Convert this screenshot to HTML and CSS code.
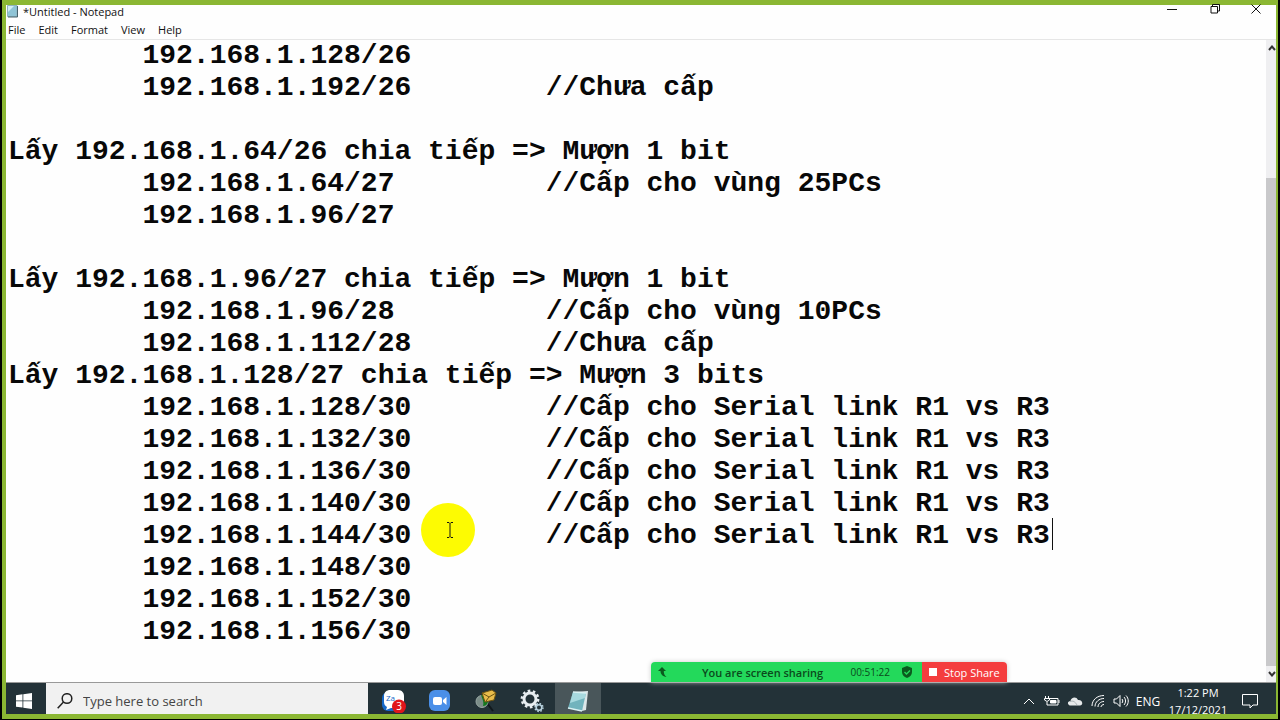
FILE: index.html
```html
<!DOCTYPE html>
<html lang="vi">
<head>
  <meta charset="UTF-8">
  <meta name="viewport" content="width=device-width, initial-scale=1">
  <title>*Untitled - Notepad</title>
  <link rel="stylesheet" href="styles.css">
</head>
<body>
  <div class="screen">
    <main class="notepad">
      <header class="titlebar">
        <svg class="app-icon" viewBox="0 0 12 14" aria-hidden="true">
          <path d="M1.500 1.500h9.500v11H1.500z" fill="#8fc4d6" stroke="#8fb3be"/>
          <path d="M2 8L8 2H2z" fill="#d3edf5"/>
          <path d="M11.500 2v11H2" fill="none" stroke="#45606a"/>
        </svg>
        <h1>*Untitled - Notepad</h1>
        <div class="window-buttons">
          <button aria-label="Minimize"><svg viewBox="0 0 10 10"><path d="M0 5.500h10"/></svg></button>
          <button aria-label="Restore"><svg viewBox="0 0 10 10"><path d="M1 2.500h6.500V9H1zM2.500 2.500V.5H9.500V7H7.500"/></svg></button>
          <button aria-label="Close"><svg viewBox="0 0 10 10"><path d="M.5.5l9 9M9.500.5l-9 9"/></svg></button>
        </div>
      </header>
      <nav class="menubar">
        <button>File</button>
        <button>Edit</button>
        <button>Format</button>
        <button>View</button>
        <button>Help</button>
      </nav>
      <div class="editor">
        <textarea class="document" aria-label="Text editor" wrap="off" spellcheck="false">
	192.168.1.128/26
	192.168.1.192/26	//Chưa cấp

Lấy 192.168.1.64/26 chia tiếp =&gt; Mượn 1 bit
	192.168.1.64/27		//Cấp cho vùng 25PCs
	192.168.1.96/27

Lấy 192.168.1.96/27 chia tiếp =&gt; Mượn 1 bit
	192.168.1.96/28		//Cấp cho vùng 10PCs
	192.168.1.112/28	//Chưa cấp
Lấy 192.168.1.128/27 chia tiếp =&gt; Mượn 3 bits
	192.168.1.128/30	//Cấp cho Serial link R1 vs R3
	192.168.1.132/30	//Cấp cho Serial link R1 vs R3
	192.168.1.136/30	//Cấp cho Serial link R1 vs R3
	192.168.1.140/30	//Cấp cho Serial link R1 vs R3
	192.168.1.144/30	//Cấp cho Serial link R1 vs R3
	192.168.1.148/30
	192.168.1.152/30
	192.168.1.156/30</textarea>
        <div class="scrollbar">
          <button aria-label="Scroll up"><svg viewBox="0 0 8 6"><path d="M1 5l3-3.500L7 5"/></svg></button>
          <div class="track"><div class="thumb"></div></div>
          <button aria-label="Scroll down"><svg viewBox="0 0 8 6"><path d="M1 1l3 3.500L7 1"/></svg></button>
        </div>
        <span class="caret"></span>
        <div class="pointer">
          <svg viewBox="0 0 8 16" aria-hidden="true"><path d="M1 .5h2l1 1 1-1h2M4 1.500v13M1 15.500h2l1-1 1 1h2"/></svg>
        </div>
      </div>
      <div class="share-bar">
        <div class="share-status">
          <svg class="share-arrow" viewBox="0 0 10 10" aria-hidden="true"><path d="M4 0L0 4h2.500c0 3 2 5.500 6 6C6.500 8.500 5.800 7 5.800 4H8z"/></svg>
          <strong>You are screen sharing</strong>
          <time>00:51:22</time>
          <svg class="share-shield" viewBox="0 0 10 12" aria-hidden="true"><path d="M5 0l5 2v4c0 3-2 5-5 6C2 11 0 9 0 6V2z" fill="#0b5a1e"/><path d="M2.500 6l2 2 3.500-3.500" fill="none" stroke="#23d95b" stroke-width="1.400"/></svg>
        </div>
        <button class="stop-share"><span class="stop-square"></span>Stop Share</button>
      </div>
    </main>

    <footer class="taskbar">
      <button class="start" aria-label="Start">
        <svg viewBox="0 0 16 16"><path d="M0 2.200L6.500 1.300v6.200H0zM7.300 1.200L16 0v7.500H7.300zM0 8.300h6.500v6.300L0 13.700zM7.300 8.300H16V16l-8.700-1.200z" fill="#fff"/></svg>
      </button>
      <label class="search">
        <svg viewBox="0 0 16 16" aria-hidden="true"><circle cx="10" cy="5.500" r="4.800"/><path d="M6.500 9L.7 15.300"/></svg>
        <input type="text" placeholder="Type here to search" aria-label="Type here to search">
      </label>
      <div class="apps">
        <button aria-label="Zalo">
          <svg viewBox="0 0 24 24">
            <rect x="0" y="3" width="20" height="19" rx="6" fill="#1668c9"/>
            <path d="M8 1h8c4 0 6 3 6 6v6c0 4-3 6-6 6H9l-5 2 1-3c-2-1-3-3-3-5V7c0-4 3-6 6-6z" fill="#fff"/>
            <text x="4" y="12" class="zalo-text">Za</text>
            <circle cx="17" cy="17.500" r="7" fill="#e0141c"/>
            <text x="17" y="21" class="badge-text">3</text>
          </svg>
        </button>
        <button aria-label="Zoom">
          <svg viewBox="0 0 24 24">
            <rect x="1" y="1" width="21" height="21" rx="6" fill="#4a8fe8"/>
            <rect x="5" y="8" width="9" height="8" rx="2" fill="#fff"/>
            <path d="M15 11l3.500-3v8L15 13z" fill="#fff"/>
          </svg>
        </button>
        <button aria-label="Packet Tracer">
          <svg viewBox="0 0 24 24">
            <path d="M13 14l6 8" stroke="#10181c" stroke-width="2"/>
            <circle cx="8" cy="12.500" r="6" fill="#7b8d88" stroke="#9aa8a4"/>
            <path d="M7 6c5 0 8 3 7 7-1 3-3 4-5 4 1-3 0-6-2-11z" fill="#13791f"/>
            <path d="M8 4l10-3 4 3-2 7-9 2z" fill="#e9bd4b" stroke="#6b5312"/>
            <path d="M8 4l7 4 7-4M15 8l-3 4" fill="none" stroke="#6b5312"/>
          </svg>
        </button>
        <button aria-label="Settings">
          <svg viewBox="0 0 24 24" fill="none" stroke="#e8eef1">
            <circle cx="10" cy="10" r="6" stroke-width="3"/>
            <circle cx="10" cy="10" r="8.200" stroke-width="2.400" stroke-dasharray="2.600 2.552"/>
            <circle cx="19" cy="18.500" r="2.800" stroke="#b9d3df" stroke-width="1.600"/>
            <circle cx="19" cy="18.500" r="4" stroke="#b9d3df" stroke-width="1.400" stroke-dasharray="1.600 1.542"/>
          </svg>
        </button>
        <button class="active" aria-label="Notepad">
          <svg viewBox="0 0 24 24">
            <path d="M7 3l15-1-2 19-4 1z" fill="#dce6e8"/>
            <path d="M7 3l13 1-4 18-14-3z" fill="#71b3bd"/>
            <path d="M7 3l13 1-1 5L4 14z" fill="#a7d9df"/>
            <path d="M7 3l13 1M16 22L2 19" stroke="#d9f1f3" stroke-width="1.500"/>
          </svg>
        </button>
      </div>
      <div class="tray">
        <button aria-label="Show hidden icons"><svg viewBox="0 0 16 14"><path d="M3 10l5-5 5 5"/></svg></button>
        <button aria-label="Battery"><svg viewBox="0 0 16 14"><path d="M4 4.500h10v6.500H3V8M15 6v3M1.500 2v2M4.500 2v2M.5 4.500h5V6L3 7.500.5 6z"/><path d="M6.500 6.500H12V9H6.500z" fill="#fff"/></svg></button>
        <button aria-label="OneDrive"><svg viewBox="0 0 16 14"><path d="M4 11.500C0 11.500 0 7 3.500 7 4 3 9.500 2 11 6c5-.5 5.500 5.500 2 5.500z" fill="#e6e9ea" stroke="none"/><path d="M3 7.500c3-1 5 0 7 3.500" stroke="#aab3b6"/></svg></button>
        <button aria-label="Wi-Fi"><svg viewBox="0 0 16 14"><path d="M2 12C2 6 7 1.500 14 1.500M5 12.500c0-4.500 4-8 9-8M8 13c0-3 2.500-5.500 6-5.500M11 13c0-1.500 1.500-2.500 3-2.500"/></svg></button>
        <button aria-label="Volume"><svg viewBox="0 0 16 14"><path d="M1 5v4h2.500L7 12.500v-11L3.500 5zM9 5c1 1.200 1 2.800 0 4M11 3c2 2.300 2 5.700 0 8M13 1.500c3 3 3 8 0 11"/></svg></button>
        <button class="language">ENG</button>
        <button class="clock"><span>1:22 PM</span><span>17/12/2021</span></button>
        <button class="notifications" aria-label="Notifications"><svg viewBox="0 0 16 16"><path d="M.5 1.500h15v10.500H11l-3 3v-3H.5z"/></svg></button>
      </div>
    </footer>
  </div>
</body>
</html>
```

FILE: styles.css
```css
:root {
  --green: #8bb733;
  --taskbar: #233238;
  --share: #23d95b;
  --stop: #f43d3e;
}
* { margin: 0; padding: 0; box-sizing: border-box; }
body { background: #000; color: #111; font-family: "Open Sans", "Noto Sans", sans-serif; font-size: 11px; }
button { background: none; border: none; color: inherit; font: inherit; }
svg { display: block; }

.screen { display: flex; flex-direction: column; height: 100vh; border: solid #000; border-width: 0 2px 1px; overflow: hidden; }
.notepad { position: relative; flex: 1; min-height: 0; display: flex; flex-direction: column; background: #fefefe; border: solid var(--green); border-width: 5px 2px 0 4px; }

.titlebar { display: flex; align-items: center; height: 12px; }
.app-icon { width: 12px; height: 14px; }
.titlebar h1 { margin-left: 5px; font-size: 11px; font-weight: 400; }
.window-buttons { display: flex; margin-left: auto; }
.window-buttons button { display: flex; align-items: center; justify-content: center; width: 43px; height: 14px; padding-bottom: 4px; }
.window-buttons button:last-child { width: 40px; }
.window-buttons svg { width: 10px; height: 10px; fill: none; stroke: #111; }
.menubar { display: flex; gap: 13px; height: 23px; padding: 3px 0 0 2px; border-bottom: 1px solid #e6e6e6; }
.menubar button { line-height: 20px; }

.editor { position: relative; flex: 1; min-height: 0; display: flex; border-bottom: 1px solid #999; }
.document { flex: 1; min-width: 0; padding-left: 2px; border: none; outline: none; resize: none; overflow: hidden; background: #fefefe; color: #080808; font: bold 28px/32px "Liberation Mono", monospace; tab-size: 8; white-space: pre; }
.scrollbar { display: flex; flex-direction: column; width: 10px; background: #efeff1; }
.scrollbar button { display: flex; align-items: center; justify-content: flex-end; height: 16px; }
.scrollbar svg { width: 8px; height: 6px; fill: none; stroke: #333; stroke-width: 2; }
.track { flex: 1; display: flex; flex-direction: column; justify-content: flex-end; }
.thumb { height: 80%; background: #c9c9cb; }
.caret { position: absolute; left: 1046px; top: 478px; width: 1px; height: 32px; background: #111; }
.pointer { position: absolute; left: 415px; top: 463px; display: flex; align-items: center; justify-content: center; width: 54px; height: 54px; border-radius: 50%; background: #fdfb02; }
.pointer svg { width: 8px; height: 16px; margin-left: 4px; fill: none; stroke: #111; }

.share-bar { position: absolute; left: 645px; bottom: 1px; display: flex; height: 20px; border-radius: 4px 4px 0 0; overflow: hidden; box-shadow: 0 0 5px #ccc; }
.share-status { display: flex; align-items: center; width: 271px; padding: 0 10px 0 7px; background: var(--share); color: #0b4a1c; }
.share-status strong { margin-left: 34px; font-weight: 600; }
.share-status time { margin-left: auto; font-size: 10px; }
.share-arrow { width: 10px; height: 10px; fill: #0b5a1e; }
.share-shield { width: 10px; height: 12px; margin-left: 12px; }
.stop-share { display: flex; align-items: center; gap: 7px; width: 85px; padding-left: 7px; background: var(--stop); color: #fff; font-weight: 500; white-space: nowrap; }
.stop-square { width: 8px; height: 8px; background: #fff; }

.taskbar { display: flex; height: 36px; background: var(--taskbar); color: #fff; border: solid var(--green); border-width: 0 2px 5px 4px; }
.taskbar button { display: flex; align-items: center; justify-content: center; padding-top: 5px; }
.taskbar .start { justify-content: flex-start; width: 40px; padding-left: 10px; }
.start svg { width: 16px; height: 16px; }
.search { display: flex; align-items: center; gap: 10px; width: 322px; padding: 5px 0 0 11px; background: #f1f1f1; }
.search svg { width: 16px; height: 16px; fill: none; stroke: #222; stroke-width: 1.500; }
.search input { flex: 1; min-width: 0; border: none; outline: none; background: none; font: 13px/20px "Open Sans", sans-serif; }
.search input::placeholder { color: #444; opacity: 1; }
.apps { display: flex; margin-left: 3px; }
.apps button { width: 46px; }
.apps svg { width: 24px; height: 24px; }
.apps .active { background: #49565a; }
.zalo-text { font: 8px "Open Sans", sans-serif; fill: #1668c9; }
.badge-text { font: 10px "Open Sans", sans-serif; fill: #fff; text-anchor: middle; }

.tray { display: flex; margin-left: auto; font-size: 12px; }
.tray button { width: 23px; }
.tray svg { width: 16px; height: 14px; fill: none; stroke: #fff; }
.tray .language { width: 32px; }
.tray .clock { flex-direction: column; width: 68px; height: 34px; padding: 1px 0 0; font-size: 11px; line-height: 17px; }
.tray .notifications { width: 36px; margin-right: 8px; }
.notifications svg { width: 16px; height: 16px; }
```
